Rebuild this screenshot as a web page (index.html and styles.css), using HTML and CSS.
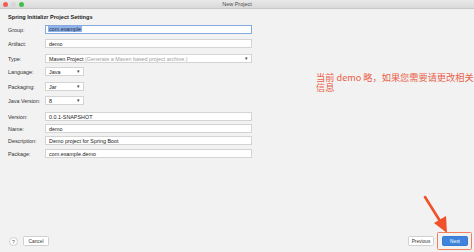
FILE: index.html
```html
<!DOCTYPE html>
<html lang="en">
<head>
  <meta charset="UTF-8" />
  <meta name="viewport" content="width=device-width, initial-scale=1.0" />
  <title>New Project</title>
  <link rel="stylesheet" href="styles.css">
</head>
<body>
  <div class="window">
    <div class="titlebar">
      <div class="lights">
        <span class="light red"></span>
        <span class="light yellow"></span>
        <span class="light green"></span>
      </div>
      <div class="title">New Project</div>
    </div>

    <div class="content">
      <h1>Spring Initializr Project Settings</h1>

      <div class="row first">
        <label>Group:</label>
        <div class="field focused"><span class="selected">com.example</span></div>
      </div>
      <div class="row gap5">
        <label>Artifact:</label>
        <div class="field">demo</div>
      </div>

      <div class="row gap6">
        <label>Type:</label>
        <div class="field select">Maven Project <span class="hint">(Generate a Maven based project archive.)</span><span class="caret">▾</span></div>
      </div>
      <div class="row gap4">
        <label>Language:</label>
        <div class="field select small">Java<span class="caret">▾</span></div>
      </div>
      <div class="row gap6">
        <label>Packaging:</label>
        <div class="field select small">Jar<span class="caret">▾</span></div>
      </div>
      <div class="row gap5">
        <label>Java Version:</label>
        <div class="field select small">8<span class="caret">▾</span></div>
      </div>

      <div class="row gap7">
        <label>Version:</label>
        <div class="field">0.0.1-SNAPSHOT</div>
      </div>
      <div class="row gap3">
        <label>Name:</label>
        <div class="field">demo</div>
      </div>
      <div class="row gap3">
        <label>Description:</label>
        <div class="field">Demo project for Spring Boot</div>
      </div>
      <div class="row gap4">
        <label>Package:</label>
        <div class="field">com.example.demo</div>
      </div>
    </div>

    <div class="footer">
      <div class="left">
        <span class="help">?</span>
        <button class="btn">Cancel</button>
      </div>
      <div class="right">
        <button class="btn">Previous</button>
        <button class="btn primary">Next</button>
      </div>
    </div>

    <div class="note">当前 demo 略，如果您需要请更改相关信息</div>
    <svg class="arrow" width="40" height="45" viewBox="0 0 40 45">
      <path d="M3 2 L18 26" stroke="#f0502a" stroke-width="2.6" stroke-linecap="round" fill="none"/>
      <polygon points="12,28 24,21 25,38" fill="#f0502a"/>
    </svg>
    <div class="mark"></div>
  </div>
</body>
</html>
```

FILE: styles.css
```css
* {
  box-sizing: border-box;
  margin: 0;
  padding: 0;
}
body {
  font-family: 'Liberation Sans', Arial, sans-serif;
  background: #f2f2f2;
  color: #2b2b2b;
}
.window {
  position: relative;
  width: 474px;
  height: 252px;
  display: flex;
  flex-direction: column;
  background: #f2f2f2;
}
.titlebar {
  position: relative;
  height: 9px;
  background: linear-gradient(#e9e9e9, #d9d9d9);
  border-bottom: 1px solid #c8c8c8;
}
.lights {
  position: absolute;
  left: 3px;
  top: 2px;
  display: flex;
  gap: 3px;
}
.light {
  width: 5px;
  height: 5px;
  border-radius: 50%;
}
.light.red { background: #f05f57; }
.light.yellow { background: #d6d6d6; }
.light.green { background: #3fc04b; }
.title {
  text-align: center;
  font-size: 5.5px;
  line-height: 9px;
  color: #4a4a4a;
}
.content {
  padding: 0 0 0 8px;
}
h1 {
  font-size: 5.6px;
  font-weight: bold;
  margin-top: 4px;
  height: 8px;
  line-height: 8px;
  color: #222;
}
.row {
  display: flex;
  align-items: center;
  height: 9px;
}
.row.first { margin-top: 4px; }
.row.gap3 { margin-top: 3px; }
.row.gap4 { margin-top: 4px; }
.row.gap5 { margin-top: 5px; }
.row.gap6 { margin-top: 6px; }
.row.gap7 { margin-top: 7px; }
label {
  width: 37px;
  font-size: 5.4px;
  color: #333;
}
.field {
  position: relative;
  width: 207px;
  height: 9px;
  line-height: 8px;
  padding-left: 3px;
  font-size: 5.4px;
  color: #222;
  background: #fff;
  border: 0.5px solid #d4d4d4;
}
.field.focused {
  border: 1px solid #86a9e0;
  line-height: 7px;
  padding-left: 2px;
}
.selected {
  background: #8fb2e8;
  color: #1c2a44;
  padding: 0 1px;
}
.field.small {
  width: 39px;
}
.hint {
  color: #a0a0a0;
}
.caret {
  position: absolute;
  right: 3px;
  top: 0;
  font-size: 4.5px;
  color: #444;
}
.footer {
  margin-top: auto;
  height: 16px;
  padding: 0 6px 6px 9px;
  display: flex;
  justify-content: space-between;
  align-items: center;
}
.left, .right {
  display: flex;
  align-items: center;
}
.help {
  width: 9px;
  height: 9px;
  border-radius: 50%;
  background: #fff;
  border: 0.5px solid #cfcfcf;
  font-size: 5px;
  line-height: 8px;
  text-align: center;
  color: #555;
  margin-right: 5px;
}
.btn {
  font-family: 'Liberation Sans', Arial, sans-serif;
  width: 26px;
  height: 10px;
  font-size: 4.8px;
  background: #fff;
  border: 0.5px solid #d0d0d0;
  border-radius: 1.5px;
  color: #333;
}
.right .btn {
  margin-left: 8px;
}
.btn.primary {
  background: #3f84dc;
  border-color: #3a7bd0;
  color: #fff;
}
.note {
  position: absolute;
  left: 316px;
  top: 72px;
  width: 158px;
  font-family: 'Noto Sans CJK SC', 'Liberation Sans', sans-serif;
  font-size: 9.2px;
  line-height: 10px;
  color: #ea6048;
}
.arrow {
  position: absolute;
  left: 422px;
  top: 195px;
}
.mark {
  position: absolute;
  left: 437px;
  top: 232px;
  width: 35px;
  height: 18px;
  border: 1.5px solid #f0805e;
  border-radius: 1.5px;
}
```
